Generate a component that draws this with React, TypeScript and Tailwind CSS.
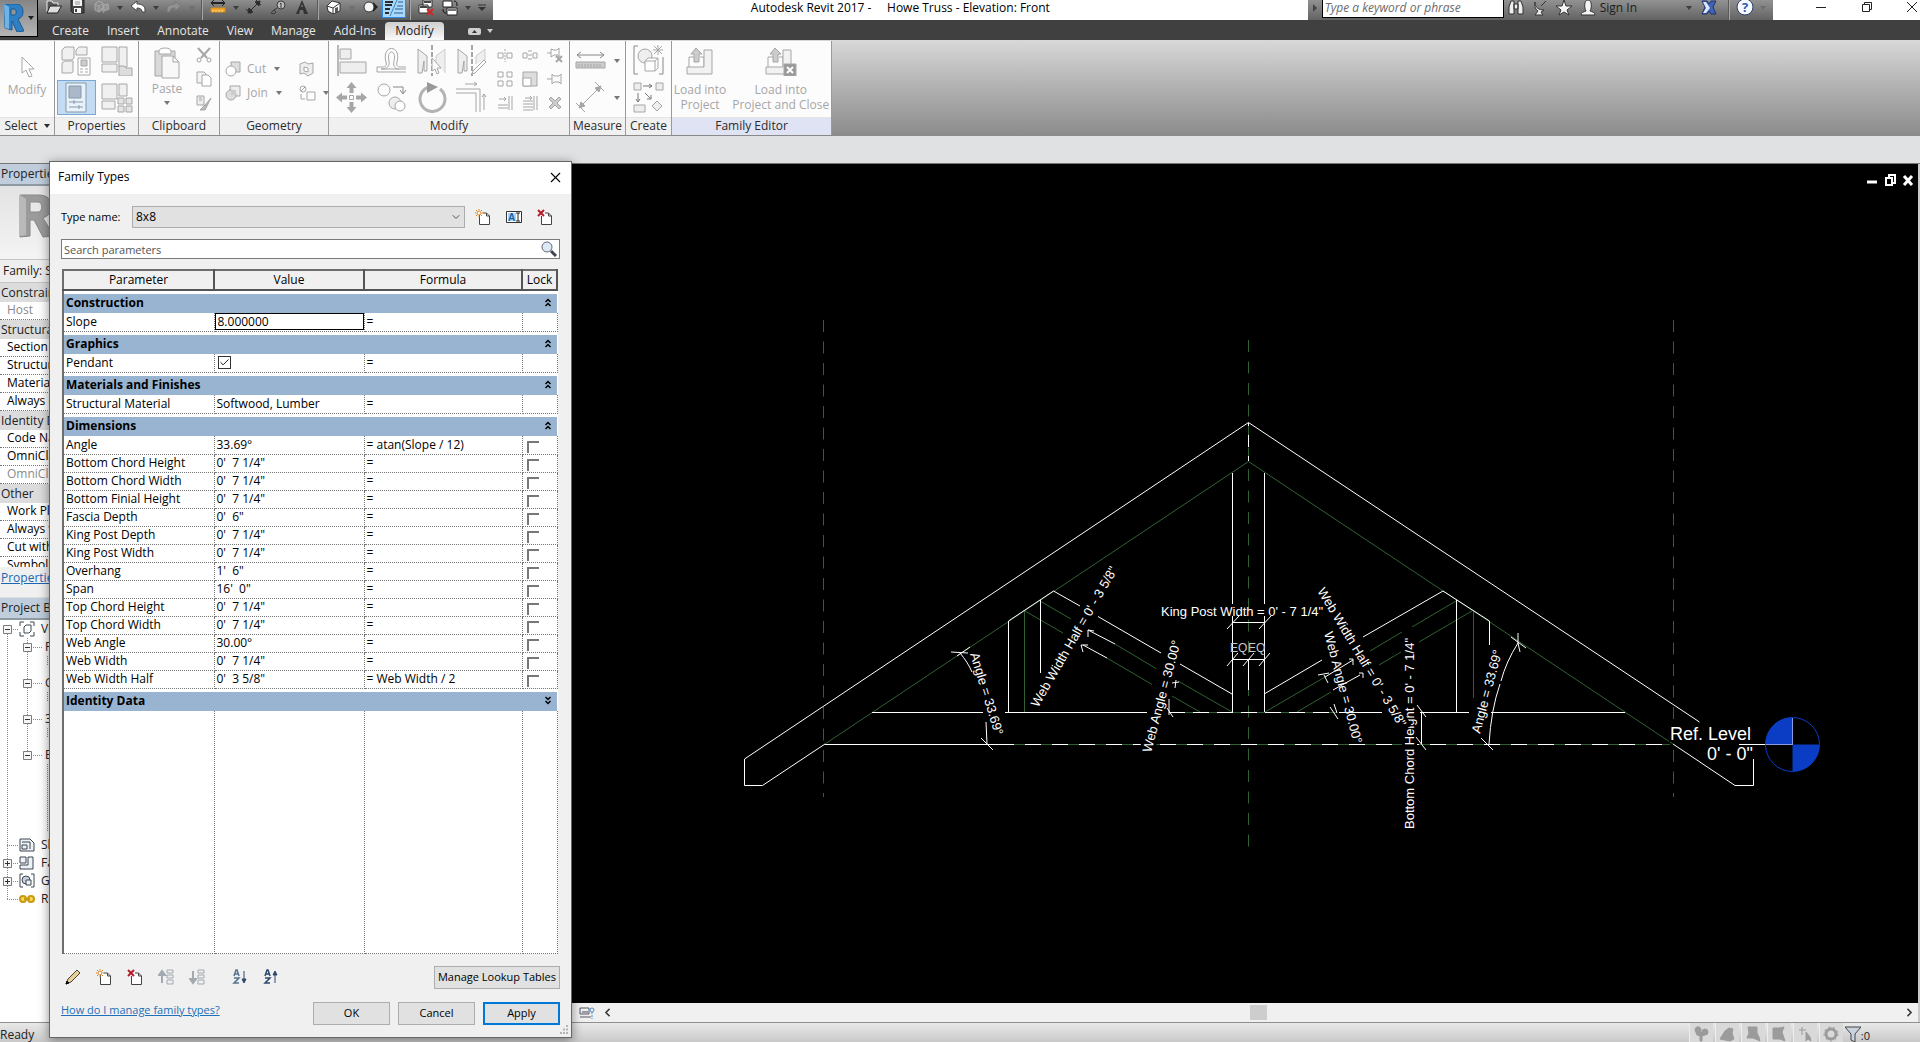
import React from "react";
import { Check, ChevronDown, ChevronLeft, ChevronRight, X } from "lucide-react";

type IconProps = {
  w?: number;
  h?: number;
  className?: string;
  children: React.ReactNode;
};

const Icon = ({ w = 16, h = 16, className, children }: IconProps) => (
  <svg
    width={w}
    height={h}
    viewBox={`0 0 ${w} ${h}`}
    fill="none"
    stroke="currentColor"
    strokeWidth={1}
    className={`shrink-0 ${className ?? ""}`}
    aria-hidden="true"
  >
    {children}
  </svg>
);

const Caret = ({ className }: { className?: string }) => (
  <Icon w={6} h={4} className={className}>
    <path d="M0 0h6L3 4z" fill="currentColor" stroke="none" />
  </Icon>
);

/* ---------- quick access toolbar ---------- */

const QuickButton = (props: { label: string; children: React.ReactNode }) => (
  <button
    aria-label={props.label}
    className="flex h-5 w-6 shrink-0 items-start justify-center"
  >
    {props.children}
  </button>
);

const QuickCaret = ({ dim }: { dim?: boolean }) => (
  <span
    className={`flex h-4 w-3 shrink-0 items-center justify-center ${dim ? "text-[#6c6c6c]" : "text-[#3c3c3c]"}`}
  >
    <Caret />
  </span>
);

const QuickDivider = () => (
  <span className="mx-[3px] h-5 w-0.5 shrink-0 border-l border-[#5a5a5a] bg-[#a5a5a5]" />
);

const QuickAccess = () => (
  <div className="flex h-5 w-[493px] shrink-0 items-start bg-gradient-to-b from-[#8e8e8e] to-[#5b5b5b] pl-[42px]">
    <QuickButton label="Open">
      <Icon h={15}>
        <path d="M1 12V1h5l1 2h5v3" fill="#555" stroke="#eee" />
        <path d="M1 13l3-7h11.500l-4 7z" fill="#ddd" stroke="#222" />
      </Icon>
    </QuickButton>
    <QuickButton label="Save">
      <Icon h={15}>
        <path d="M1 0h13v13H3l-2-2z" fill="#444" stroke="#222" />
        <path d="M3 0h9v6H3zM4 8h7v5H4z" fill="#f2f2f2" stroke="none" />
        <path d="M5 2h5M5 4h5" stroke="#999" />
        <path d="M5 9h2v3H5z" fill="#444" stroke="none" />
      </Icon>
    </QuickButton>
    <QuickButton label="Synchronize">
      <Icon h={15} className="text-[#a9a9a9]">
        <path d="M1 4l4-3 4 2v6l-4 3-4-2zM1 4l4 2 4-3M5 6v6" fill="#8b8b8b" />
        <path d="M9 5l5-1 1 5-5 2zM7 8l3 5" fill="#959595" />
      </Icon>
    </QuickButton>
    <QuickCaret />
    <QuickButton label="Undo">
      <Icon h={15}>
        <path
          d="M1 6l6-5v3c5 0 8 2 8 6v2h-3c0-3-2-4-5-4v3z"
          fill="#fff"
          stroke="#444"
        />
      </Icon>
    </QuickButton>
    <QuickCaret />
    <QuickButton label="Redo">
      <Icon h={15}>
        <path
          d="M15 6L9 1v3C4 4 1 6 1 10v2h3c0-3 2-4 5-4v3z"
          fill="#919191"
          stroke="#777"
        />
      </Icon>
    </QuickButton>
    <QuickCaret dim />
    <QuickDivider />
    <QuickButton label="Measure">
      <Icon h={15}>
        <path d="M1 3h14" stroke="#222" strokeWidth={2} />
        <path d="M4 0L1 3l3 3M12 0l3 3-3 3" stroke="#222" />
        <path d="M1 8h14v4H1z" fill="#f3a62d" stroke="#d98b16" />
        <path d="M3 10v2M6 10v2M9 10v2M12 10v2" stroke="#fbe3a5" />
      </Icon>
    </QuickButton>
    <QuickCaret />
    <QuickButton label="Aligned Dimension">
      <Icon h={15} className="text-[#2d2d2d]">
        <path d="M3 12L13 2" />
        <path d="M2 13l1-5 4 4zM14 1l-1 5-4-4z" fill="currentColor" />
        <path d="M0 9l5 5M10 0l5 5" />
      </Icon>
    </QuickButton>
    <QuickButton label="Tag by Category">
      <Icon h={15} className="text-[#383838]">
        <circle cx="11" cy="5" r="4" fill="#bdbdbd" />
        <path d="M10 4l1-1v5M7 8l-3 2" />
        <path d="M1 13l3-3 2 2-2 2z" />
      </Icon>
    </QuickButton>
    <QuickButton label="Text">
      <Icon h={15}>
        <path
          d="M2 14L8 0l6 14h-4l-1-4H6l-1 4zM7 7h2L8 4z"
          fill="#333"
          stroke="none"
        />
      </Icon>
    </QuickButton>
    <QuickDivider />
    <QuickButton label="Default 3D View">
      <Icon h={15}>
        <path
          d="M1 6l5-5 8 2v8l-7 3-5-3z"
          fill="#fff"
          stroke="#333"
        />
        <path d="M1 6l6 2 7-5M7 8v6" stroke="#333" />
        <path d="M9 8l3-1v5l-3 1z" fill="#555" stroke="none" />
      </Icon>
    </QuickButton>
    <QuickCaret dim />
    <QuickButton label="Section">
      <Icon h={15}>
        <path d="M11 2l5 5-5 5z" fill="#222" stroke="none" />
        <circle cx="7" cy="7" r="5" fill="#f4f4f4" stroke="#333" />
      </Icon>
    </QuickButton>
    <button
      aria-label="Thin Lines"
      aria-pressed="true"
      className="flex h-[18px] w-6 shrink-0 items-start justify-center border border-t-0 border-[#2e8ae6] bg-[#a8d8fa]"
    >
      <Icon w={20} h={16}>
        <path d="M13 0L6 16" stroke="#3b82c4" />
        <path d="M1 2h8M1 5h7M1 9h5M1 13h4" stroke="#2b2b2b" strokeWidth={2} />
        <path d="M14 2h5M13 6h6M11 9h8M10 13h9" stroke="#2b5f8f" />
      </Icon>
    </button>
    <QuickDivider />
    <QuickButton label="Close Hidden Windows">
      <Icon h={16}>
        <path d="M5 0h9v7H5zM1 5h9v8H1z" fill="#fff" stroke="#333" />
        <path d="M2 7h7M6 2h7" stroke="#444" strokeWidth={2} />
        <path d="M9 9l6 6M15 9l-6 6" stroke="#cc2a2a" strokeWidth={2} />
      </Icon>
    </QuickButton>
    <QuickButton label="Switch Windows">
      <Icon h={16}>
        <path d="M1 1h9v6H1zM5 8h10v7H5z" fill="#fff" stroke="#222" />
        <path d="M6 10h8" stroke="#777" strokeWidth={2} />
        <path d="M12 1c3 0 3 2 3 5M1 9c0 3 1 4 3 4" stroke="#111" />
      </Icon>
    </QuickButton>
    <QuickCaret />
    <span className="flex h-4 w-4 items-center justify-center">
      <Icon w={8} h={8}>
        <path d="M0 1h8" stroke="#333" />
        <path d="M0 3h8L4 7z" fill="#333" stroke="none" />
      </Icon>
    </span>
  </div>
);

const InfoCenter = () => (
  <div className="flex h-5 shrink-0 items-start bg-gradient-to-b from-[#929292] to-[#636363]">
    <span className="flex h-4 w-[14px] items-center justify-center">
      <Icon w={4} h={8}>
        <path d="M0 0l4 4-4 4z" fill="#444" stroke="none" />
      </Icon>
    </span>
    <input
      type="text"
      aria-label="Search help"
      placeholder="Type a keyword or phrase"
      className="h-[18px] w-[182px] border border-t-0 border-black bg-white px-0.5 pb-0.5 text-xs italic text-[#555] placeholder:text-[#6b6b6b]"
    />
    <div className="flex items-start">
      <QuickButton label="Search">
        <Icon>
          <path
            d="M1 14V7l2-6h3v13zM10 14V1h3l2 6v7zM6 4h4v5H6z"
            fill="#eee"
            stroke="#333"
          />
        </Icon>
      </QuickButton>
      <QuickButton label="Subscription Center">
        <Icon>
          <path
            d="M3 2c0 6 4 8 9 8L9 12l2 3H3l3-4C3 9 2 5 3 2zM9 6l5-5"
            fill="#eee"
            stroke="#333"
          />
        </Icon>
      </QuickButton>
      <QuickButton label="Favorites">
        <Icon>
          <path
            d="M8 0l2 6h6l-5 4 2 5-5-3-5 3 2-5-5-4h6z"
            fill="#f4f4f4"
            stroke="#333"
          />
        </Icon>
      </QuickButton>
      <button className="flex h-5 items-start gap-1 pl-1 text-xs text-[#1c1c1c]">
        <Icon>
          <path
            d="M1 15c0-3 3-3 5-4-2-3-2-11 2-11s4 8 2 11c2 1 5 1 5 4z"
            fill="#f4f4f4"
            stroke="#333"
          />
        </Icon>
        Sign In
      </button>
    </div>
    <span className="w-[46px]" />
    <QuickCaret />
    <QuickButton label="Exchange Apps">
      <Icon className="ml-1">
        <path
          d="M1 1h5l2 3 2-3h5l-3 6 3 7h-5l-2-3-2 3H1l3-7z"
          fill="#3f63b5"
          stroke="#20356d"
        />
        <path d="M2 2h3l4 6-4 5H2l3-5z" fill="#dfe7fa" stroke="none" />
      </Icon>
    </QuickButton>
    <span className="ml-1.5 flex">
      <QuickDivider />
    </span>
    <QuickButton label="Help">
      <svg width="18" height="16" viewBox="0 0 18 16" aria-hidden="true">
        <circle cx="9" cy="7" r="8" fill="#f6f9ff" stroke="#2d3f66" />
        <text
          x="9"
          y="12"
          textAnchor="middle"
          fontFamily="Open Sans, sans-serif"
          fontSize="13"
          fontWeight="700"
          fill="#2f5cae"
        >
          ?
        </text>
      </svg>
    </QuickButton>
    <QuickCaret dim />
    <span className="w-1" />
  </div>
);

const WindowButtons = () => (
  <div className="flex h-5 w-[147px] shrink-0 items-start justify-between bg-white pl-10 text-[#222]">
    <button aria-label="Minimize">
      <Icon h={14}>
        <path d="M3 7.500h10" />
      </Icon>
    </button>
    <button aria-label="Restore">
      <Icon h={14}>
        <path d="M3.500 4.500h7v7h-7zM5.500 4.500v-2h7v7h-2" />
      </Icon>
    </button>
    <button aria-label="Close">
      <Icon h={14}>
        <path d="M3 2l10 10M13 2L3 12" />
      </Icon>
    </button>
  </div>
);

const TitleBar = () => (
  <header className="flex h-5 shrink-0 bg-white">
    <QuickAccess />
    <h1 className="flex-1 whitespace-pre text-center text-xs leading-[15px] text-black">
      {"Autodesk Revit 2017 -     Howe Truss - Elevation: Front"}
    </h1>
    <InfoCenter />
    <WindowButtons />
  </header>
);

const tabs = ["Create", "Insert", "Annotate", "View", "Manage", "Add-Ins"];

const TabBar = () => (
  <nav className="flex h-5 shrink-0 items-end bg-[#404040] pl-[43px] text-xs text-[#e6e6e6]">
    {tabs.map((tab) => (
      <button key={tab} className="h-[18px] px-[9px] leading-4">
        {tab}
      </button>
    ))}
    <button className="h-[18px] rounded-t-sm bg-gradient-to-b from-[#cfcfcf] to-[#fafafa] px-2.5 leading-4 text-[#222]">
      Modify
    </button>
    <button
      aria-label="Minimize ribbon"
      className="ml-6 flex h-[18px] items-center gap-1.5 text-[#d0d0d0]"
    >
      <Icon w={13} h={7}>
        <rect width="13" height="7" rx="2" fill="#cfcfcf" stroke="none" />
        <path d="M4 5h5L6.500 2z" fill="#333" stroke="none" />
      </Icon>
      <Caret />
    </button>
  </nav>
);

const AppButton = () => (
  <button
    aria-label="Application menu"
    className="absolute left-0 top-0 z-10 flex h-[37px] w-[38px] items-center border-b border-r border-black bg-gradient-to-b from-[#858585] to-[#b5b5b5] pl-1"
  >
    <Icon w={20} h={28}>
      <path
        d="M0 0h11c6 0 8 3 8 8 0 4-2 6-5 7l6 12-7 1-5-11v9l-7-2zM7 5v6h3c3 0 3-6 0-6z"
        fill="#2f7fc4"
        stroke="#1b5b96"
      />
      <path d="M0 0l5 3v22l-4-1z" fill="#6fb4e8" stroke="none" />
    </Icon>
    <Caret className="ml-1 text-[#222]" />
  </button>
);

/* ---------- ribbon ---------- */

type PanelProps = {
  title: React.ReactNode;
  width: string;
  accent?: boolean;
  children: React.ReactNode;
};

const Panel = ({ title, width, accent, children }: PanelProps) => (
  <section
    className={`flex shrink-0 flex-col border-r border-[#9a9a9a] bg-[#fcfcfc] ${width}`}
  >
    <div className="flex h-[76px] items-center justify-center text-[#a6a6a6]">
      {children}
    </div>
    <h2
      className={`flex h-[18px] items-center justify-center border-t border-[#e4e4e4] pb-0.5 text-xs text-[#2c2c2c] ${accent ? "bg-[#dfe3f3]" : "bg-[#f0f0f1]"}`}
    >
      {title}
    </h2>
  </section>
);

const Tool = (props: {
  label: string;
  className?: string;
  children: React.ReactNode;
}) => (
  <button
    aria-label={props.label}
    className={`flex items-center justify-center ${props.className ?? ""}`}
  >
    {props.children}
  </button>
);

const Ribbon = () => (
  <div className="flex h-24 shrink-0 border-b border-[#8a8a8a] bg-gradient-to-b from-[#d8d8d8] to-[#8c8c8c] pt-px">
    <Panel
      title={
        <>
          Select <Caret className="ml-1.5" />
        </>
      }
      width="w-[55px]"
    >
      <button className="flex flex-col items-center gap-1 pb-1 text-xs">
        <Icon w={14} h={22}>
          <path d="M2 1v16l4-3 3 7 3-1-3-7h5z" fill="#fff" />
        </Icon>
        Modify
      </button>
    </Panel>

    <Panel title="Properties" width="w-[84px]">
      <div className="grid grid-cols-2 gap-0.5">
        <Tool label="Family Category" className="h-[35px] w-[39px]">
          <Icon w={30} h={30}>
            <path
              d="M1 4l3-3h9v11l-2 2H1zM15 4l3-3h8v8h-11zM1 17l3-2h8v11l-2 1H1z"
              fill="#f0f0f0"
            />
            <path d="M17 12h12v17H17z" fill="#fff" />
            <path d="M20 14h6v6h-6z" fill="#ccc" />
            <path d="M19 23h3M24 23h3M19 26h3M24 26h3" />
          </Icon>
        </Tool>
        <Tool label="Family Types" className="h-[35px] w-[39px]">
          <Icon w={32} h={30}>
            <path d="M1 1h15v15H1zM18 1h8v20h-8zM1 18h15v8H1z" fill="#f0f0f0" />
            <path d="M18 20h5l2 2h6v8H18z" fill="#ddd" />
          </Icon>
        </Tool>
        <button
          aria-label="Properties"
          aria-pressed="true"
          className="flex h-[35px] w-[39px] items-center justify-center border border-[#7da7d3] bg-[#c3dcf4] text-[#8799aa]"
        >
          <Icon w={22} h={31}>
            <path d="M1 1h20v29H1z" fill="#e8f2fb" />
            <path d="M4 4h12v12H4z" fill="#a9b9c9" />
            <path d="M4 20h14M4 25h14M9 18v4M14 23v4" />
          </Icon>
        </button>
        <Tool label="Type Properties" className="h-[35px] w-[39px]">
          <Icon w={32} h={30}>
            <path d="M1 1h15v15H1zM18 1h8v12h-8zM1 18h13v8H1z" fill="#f0f0f0" />
            <path
              d="M17 15h6v6h-6zM25 15h6v6h-6zM17 23h6v6h-6zM25 23h6v6h-6z"
              fill="#e4e4e4"
            />
          </Icon>
        </Tool>
      </div>
    </Panel>

    <Panel title="Clipboard" width="w-[81px]">
      <div className="flex gap-3.5 pl-1.5">
        <button className="flex flex-col items-center text-xs">
          <Icon w={28} h={32}>
            <path d="M2 4h20v25H2z" fill="#d9d9d9" />
            <path d="M6 4c0-4 12-4 12 0v3H6z" fill="#fff" />
            <path d="M9 9h11l6 6v16H9z" fill="#f8f8f8" />
            <path d="M20 9v6h6" />
          </Icon>
          <span className="mt-0.5 leading-4">Paste</span>
          <Caret className="mt-1 text-[#777]" />
        </button>
        <div className="flex flex-col gap-2">
          <Tool label="Cut to Clipboard">
            <Icon>
              <path d="M2 1l9 10M14 1L5 11" strokeWidth={2} />
              <circle cx="3" cy="13" r="2" />
              <circle cx="13" cy="13" r="2" />
            </Icon>
          </Tool>
          <Tool label="Copy to Clipboard">
            <Icon>
              <path d="M1 1h7l2 2v9H1z" fill="#f4f4f4" />
              <path d="M6 4h6l3 3v8H6z" fill="#fff" />
            </Icon>
          </Tool>
          <Tool label="Match Type Properties">
            <Icon>
              <path d="M1 1h7v9H1zM3 3h3M3 5h3" fill="#eee" />
              <path d="M15 3l-6 7 2 1zM9 10l-5 5h5l2-4" fill="#bbb" />
            </Icon>
          </Tool>
        </div>
      </div>
    </Panel>

    <Panel title="Geometry" width="w-[109px]">
      <div className="grid grid-cols-[74px_28px] gap-y-2 pl-1 pt-1 text-xs leading-4">
        <button className="flex items-center">
          <Icon>
            <path d="M6 1h9v10H6z" fill="#ddd" />
            <circle cx="6" cy="10" r="5" fill="#fff" />
          </Icon>
          <span className="ml-1.5">Cut</span>
          <Caret className="ml-2 text-[#777]" />
        </button>
        <Tool label="Cope" className="justify-start">
          <Icon>
            <path d="M1 3l5-2 3 2 5-1v10l-5 3-4-3-4 1z" fill="#eee" />
            <path d="M5 6l4 1v4l-4-1z" fill="#fff" />
          </Icon>
        </Tool>
        <button className="flex items-center">
          <Icon>
            <path d="M5 1h10v10H5z" fill="#eee" />
            <circle cx="6" cy="10" r="5" fill="#ddd" />
            <path d="M6 5h5v5H6z" fill="#ccc" stroke="none" />
          </Icon>
          <span className="ml-1.5">Join</span>
          <Caret className="ml-2 text-[#777]" />
        </button>
        <Tool label="Split Face" className="justify-start gap-1.5">
          <Icon w={18}>
            <circle cx="4" cy="4" r="3" />
            <path d="M2 6l4-4M2 9v5h4M8 7h8v8H8z" />
          </Icon>
          <Caret className="text-[#777]" />
        </Tool>
      </div>
    </Panel>

    <Panel title="Modify" width="w-[241px]">
      <div className="flex items-center gap-2.5">
        <div className="grid grid-cols-4 gap-x-[9px] gap-y-1.5">
          <Tool label="Align">
            <Icon w={31} h={31}>
              <path d="M2 0v31" stroke="#777" />
              <path d="M4 4h11v10H4zM4 17h26v11H4z" fill="#eee" />
            </Icon>
          </Tool>
          <Tool label="Offset">
            <Icon w={31} h={31}>
              <path d="M30 27H1v-5h5c4 0 5-2 4-5C5-1 26-1 21 17c-1 3 0 5 4 5h5" />
              <path d="M30 24H5c6 0 9-3 8-8-3-12 8-12 5 0-1 4 0 8 5 8" />
            </Icon>
          </Tool>
          <Tool label="Mirror - Pick Axis">
            <Icon w={31} h={31}>
              <path d="M16 0v31" strokeDasharray="5 2" strokeWidth={2} />
              <path d="M2 28V4l9 7v15H8V16L6 28z" fill="#eee" />
              <path d="M29 28V4l-9 7v8" fill="#eee" stroke="#ccc" />
              <path d="M16 13v13l3-2 2 5 2-1-2-5h4z" fill="#fff" />
            </Icon>
          </Tool>
          <Tool label="Mirror - Draw Axis">
            <Icon w={31} h={31}>
              <path d="M16 0v31" strokeDasharray="5 2" strokeWidth={2} />
              <path d="M2 28V4l9 7v15H8V16L6 28z" fill="#eee" />
              <path d="M29 15V4l-9 7v8" fill="#eee" stroke="#ccc" />
              <path d="M17 26l11-11 2 2-11 11-3 1z" fill="#fff" />
            </Icon>
          </Tool>
          <Tool label="Move">
            <Icon w={31} h={31}>
              <path
                d="M15.500 0l5 6h-3v5h-4V6h-3zM15.500 31l5-6h-3v-5h-4v5h-3zM0 15.500l6-5v3h5v4H6v3zM31 15.500l-6-5v3h-5v4h5v3z"
                fill="currentColor"
                stroke="none"
              />
              <path d="M13.500 13.500h4v4h-4z" fill="#fff" />
            </Icon>
          </Tool>
          <Tool label="Copy">
            <Icon w={31} h={31}>
              <circle cx="8" cy="8" r="6" />
              <circle cx="19" cy="21" r="6" fill="#eee" />
              <circle cx="24" cy="24" r="5" fill="#fff" />
              <path d="M17 5h10v6M24 8l3 4 3-4" stroke="#888" />
            </Icon>
          </Tool>
          <Tool label="Rotate">
            <Icon w={31} h={31}>
              <path
                d="M13 5a12.500 12.500 0 1 0 11 2"
                strokeWidth={3}
                stroke="#b3b3b3"
              />
              <path d="M11 0l11 5-11 6z" fill="#999" stroke="none" />
            </Icon>
          </Tool>
          <Tool label="Trim/Extend to Corner">
            <Icon w={31} h={31}>
              <path d="M0 7h24v23M0 11h20v19M9 2h12M18 0l3 2-3 2" />
              <path d="M28 28V12M26 15l2-3 2 3" />
            </Icon>
          </Tool>
        </div>
        <div className="grid grid-cols-3 gap-x-[9px] gap-y-2">
          <Tool label="Split Element">
            <Icon>
              <path d="M1 6h5v5H1zM10 6h5v5h-5z" />
              <path d="M8 2v13" strokeDasharray="2 1" />
            </Icon>
          </Tool>
          <Tool label="Split with Gap">
            <Icon>
              <path d="M1 6h4v5H1zM11 6h4v5h-4z" />
              <path d="M7 3v11M9 3v11" strokeDasharray="2 2" />
            </Icon>
          </Tool>
          <Tool label="Unpin">
            <Icon>
              <path d="M0 6h4M4 2v8l3-2h4l1 2V1l-2 2H7z" />
              <path d="M9 9l6 6M15 9l-6 6" strokeWidth={2} />
            </Icon>
          </Tool>
          <Tool label="Array">
            <Icon>
              <path d="M1 1h5v5H1zM10 1h5v5h-5zM1 10h5v5H1zM10 10h5v5h-5z" />
            </Icon>
          </Tool>
          <Tool label="Scale">
            <Icon>
              <path d="M1 1h14v14H1z" fill="#ddd" />
              <path d="M1 7h8v8H1z" fill="#fff" />
            </Icon>
          </Tool>
          <Tool label="Pin">
            <Icon>
              <path d="M0 8h5M5 3v10l2-2h5l2 2V3l-2 2H7z" />
            </Icon>
          </Tool>
          <Tool label="Trim/Extend Single">
            <Icon>
              <path d="M12 1v14M15 1v14M1 10h10M1 13h10M2 4h7M7 2l2 2-2 2" />
            </Icon>
          </Tool>
          <Tool label="Trim/Extend Multiple">
            <Icon>
              <path d="M12 1v14M15 1v14M1 6h10M1 9h10M1 12h10M1 15h10M3 3h7M8 1l2 2-2 2" />
            </Icon>
          </Tool>
          <Tool label="Delete">
            <Icon>
              <path
                d="M2 4l2-2 4 4 4-4 2 2-4 4 4 4-2 2-4-4-4 4-2-2 4-4z"
                fill="#ccc"
              />
            </Icon>
          </Tool>
        </div>
      </div>
    </Panel>

    <Panel title="Measure" width="w-14">
      <div className="flex flex-col gap-1.5">
        <Tool label="Measure Between" className="gap-2">
          <Icon w={31} h={31}>
            <path d="M2 10h27M6 7l-4 3 4 3M25 7l4 3-4 3" stroke="#888" />
            <path d="M1 17h29v6H1z" fill="#ccc" />
            <path d="M4 19v3M7 19v3M10 19v3M13 19v3M16 19v3M19 19v3M22 19v3M25 19v3" />
          </Icon>
          <Caret className="text-[#777]" />
        </Tool>
        <Tool label="Dimension" className="gap-2">
          <Icon w={31} h={31}>
            <path d="M5 25L25 5M1 21l9 9M20 0l9 9" />
            <path d="M4 26l2-6 4 4zM26 4l-6 2 4 4z" fill="currentColor" />
          </Icon>
          <Caret className="text-[#777]" />
        </Tool>
      </div>
    </Panel>

    <Panel title="Create" width="w-[46px]">
      <div className="flex flex-col gap-1.5">
        <Tool label="Create Group">
          <Icon w={31} h={31}>
            <path d="M5 1H1v28h4M26 29h4V12" stroke="#888" />
            <circle cx="12" cy="11" r="7" fill="#eee" />
            <path d="M12 16l3-3h10v10l-3 3H12zM12 16h10v10M22 16l3-3" fill="#fff" />
            <path d="M25 0v10M20 5h10M21 1l8 8M29 1l-8 8" />
          </Icon>
        </Tool>
        <Tool label="Create Similar">
          <Icon w={31} h={31}>
            <path d="M1 1h7v7H1zM23 1h7v7h-7zM1 23h11v7H1zM24 19l5 5-5 5-5-5z" fill="#eee" />
            <path d="M10 4h9M16 2l3 2-3 2M5 11v9M3 17l2 3 2-3M12 11l6 6M18 13v4h-4" stroke="#777" />
          </Icon>
        </Tool>
      </div>
    </Panel>

    <Panel title="Family Editor" width="w-40" accent>
      <div className="flex gap-1.5 text-xs leading-[15px]">
        <button className="flex flex-col items-center gap-1.5">
          <Icon w={28} h={29}>
            <path d="M8 10H3v11h15V10h-4" />
            <path d="M10 1l6 6h-3v8H8V7H5z" fill="#ccc" />
            <path d="M18 3h8v24H1v-7h17z" fill="#f2f2f2" />
          </Icon>
          <span>
            Load into
            <br />
            Project
          </span>
        </button>
        <button className="flex flex-col items-center gap-1.5">
          <Icon w={32} h={29}>
            <path d="M8 10H3v11h15V10h-4" />
            <path d="M10 1l6 6h-3v8H8V7H5z" fill="#ccc" />
            <path d="M18 3h8v24H1v-7h17z" fill="#f2f2f2" />
            <path d="M19 17h12v12H19z" fill="#999" />
            <path d="M22 20l6 6M28 20l-6 6" stroke="#fff" strokeWidth={2} />
          </Icon>
          <span>
            Load into
            <br />
            Project and Close
          </span>
        </button>
      </div>
    </Panel>
  </div>
);

/* ---------- left palettes ---------- */

interface PropertyGroup {
  name: string;
  items: { name: string; disabled?: boolean }[];
}

const propertyGroups: PropertyGroup[] = [
  { name: "Constraints", items: [{ name: "Host", disabled: true }] },
  {
    name: "Structural",
    items: [
      { name: "Section" },
      { name: "Structural" },
      { name: "Material" },
      { name: "Always export" },
    ],
  },
  {
    name: "Identity Data",
    items: [
      { name: "Code Name" },
      { name: "OmniClass" },
      { name: "OmniClass", disabled: true },
    ],
  },
  {
    name: "Other",
    items: [
      { name: "Work Plane" },
      { name: "Always vertical" },
      { name: "Cut with" },
      { name: "Symbolic" },
    ],
  },
];

const PropertiesPalette = () => (
  <section className="flex h-[434px] shrink-0 flex-col">
    <h2 className="flex h-[22px] shrink-0 items-center border-b-2 border-[#8f9aa5] bg-[#bfcddc] px-px text-xs text-[#222]">
      Properties
    </h2>
    <div className="flex h-[73px] shrink-0 items-start bg-gradient-to-b from-[#e3e3e3] to-[#f4f4f4] pl-[19px] pt-2">
      <Icon w={36} h={44}>
        <path
          d="M1 1h18c10 0 13 4 13 12 0 6-3 9-8 11l11 18-11 1-9-17h-4v16l-10 1zM11 8v10h8c5 0 5-10 0-10z"
          fill="#9b9b9b"
          stroke="#888"
        />
        <path d="M1 1l6 4v36l-6 1z" fill="#b9b9b9" stroke="none" />
      </Icon>
    </div>
    <div className="flex h-6 shrink-0 items-center border-y border-[#c4c4c4] bg-[#eeeeee] pl-[3px] text-xs text-[#222]">
      Family: Structural
    </div>
    <div className="flex-1 overflow-hidden text-xs">
      {propertyGroups.map((group) => (
        <div key={group.name}>
          <h3 className="h-[19px] bg-[#dcdcdc] pl-px leading-[19px] text-[#222]">
            {group.name}
          </h3>
          {group.items.map((item, index) => (
            <div
              key={index}
              className={`h-[18px] border-b border-dotted border-[#777] bg-white pl-[7px] leading-4 ${item.disabled ? "text-[#8a8a8a]" : "text-black"}`}
            >
              {item.name}
            </div>
          ))}
        </div>
      ))}
    </div>
    <div className="h-[31px] shrink-0 border-b border-[#ddd] bg-[#f0f0f0] pl-px text-xs leading-[22px]">
      <a href="#properties-help" className="text-[#1d66b3] underline">
        Properties help
      </a>
    </div>
  </section>
);

interface TreeRow {
  label?: string;
  level: number;
  toggle?: "plus" | "minus";
  icon?: "views" | "sheets" | "families" | "groups" | "links";
}

const treeRows: TreeRow[] = [
  { label: "Views", level: 0, toggle: "minus", icon: "views" },
  { label: "Floor Plans", level: 1, toggle: "minus" },
  { level: 2 },
  { label: "Ceiling Plans", level: 1, toggle: "minus" },
  { level: 2 },
  { label: "3D Views", level: 1, toggle: "minus" },
  { level: 2 },
  { label: "Elevations", level: 1, toggle: "minus" },
  { level: 2 },
  { level: 2 },
  { level: 2 },
  { level: 2 },
  { label: "Sheets", level: 0, icon: "sheets" },
  { label: "Families", level: 0, toggle: "plus", icon: "families" },
  { label: "Groups", level: 0, toggle: "plus", icon: "groups" },
  { label: "Revit Links", level: 0, icon: "links" },
];

const treeIcons = {
  views: (
    <>
      <path d="M1 5V1h4M11 1h4v4M15 11v4h-4M5 15H1v-4" />
      <path d="M5 6l2-2h5v6l-2 2H5z" />
    </>
  ),
  sheets: (
    <>
      <path d="M1 2h10l4 4v8H1z" fill="#eef1f5" />
      <path d="M3 5h8v7M3 8h5v4H3z" />
    </>
  ),
  families: <path d="M1 2h6v6H1zM9 2h5v12H1v-4h8z" fill="#eef1f5" />,
  groups: (
    <>
      <path d="M4 1H1v13h3M12 1h3v13h-3" />
      <circle cx="7" cy="7" r="4" fill="#c9d3de" />
      <path d="M7 7h5v5H7z" fill="#eef1f5" />
    </>
  ),
  links: (
    <g stroke="#c79a12" strokeWidth={2}>
      <rect x="1" y="5" width="6" height="6" rx="3" fill="#f8dc52" />
      <rect x="9" y="5" width="6" height="6" rx="3" fill="#f8dc52" />
      <path d="M5 8h6" />
    </g>
  ),
};

const Toggle = ({ kind }: { kind: "plus" | "minus" }) => (
  <button aria-label={kind === "plus" ? "Expand" : "Collapse"}>
    <Icon w={9} h={9} className="text-[#7c7c7c]">
      <path d="M.5.5h8v8h-8z" fill="#f6f6f6" />
      <path d={kind === "plus" ? "M2 4.500h5M4.500 2v5" : "M2 4.500h5"} stroke="#333" />
    </Icon>
  </button>
);

const ProjectBrowser = () => (
  <section className="flex flex-1 flex-col overflow-hidden">
    <h2 className="flex h-[22px] shrink-0 items-center border-b-2 border-[#8f9aa5] bg-[#bfcddc] px-px text-xs text-[#222]">
      Project Browser
    </h2>
    <div className="relative flex-1 bg-white">
      <svg
        width="60"
        height="400"
        viewBox="0 0 60 400"
        className="absolute left-0 top-0"
        aria-hidden="true"
      >
        <path
          d="M7.500 10v269M27.500 18v118M47.500 36v10M47.500 72v10M47.500 108v10M47.500 144v68M7 9.500h12M7 225.500h12M7 243.500h12M7 261.500h12M7 279.500h12M27 27.500h15M27 63.500h15M27 99.500h15M27 135.500h15"
          stroke="#8a8a8a"
          strokeDasharray="1 1"
        />
      </svg>
      <ul className="relative text-xs leading-[18px] text-[#222]">
        {treeRows.map((row, index) => (
          <li key={index} className="flex h-[18px] items-center">
            {row.level === 0 && (
              <>
                <span className="flex w-[19px] shrink-0 pl-[3px]">
                  {row.toggle && <Toggle kind={row.toggle} />}
                </span>
                {row.icon && (
                  <Icon className="mr-1.5 text-[#3d4650]">
                    {treeIcons[row.icon]}
                  </Icon>
                )}
              </>
            )}
            {row.level === 1 && (
              <span className="flex w-[45px] shrink-0 pl-[23px]">
                {row.toggle && <Toggle kind={row.toggle} />}
              </span>
            )}
            {row.label}
          </li>
        ))}
      </ul>
    </div>
  </section>
);

/* ---------- drawing area ---------- */

type NoteProps = {
  x: number;
  y: number;
  angle?: number;
  length: number;
  mask?: boolean;
  size?: number;
  children: React.ReactNode;
};

// dimension text with the blank box that hides the linework under it
const Note = ({ x, y, angle = 0, length, mask = true, size = 13, children }: NoteProps) => (
  <g transform={`translate(${x} ${y}) rotate(${angle})`} stroke="none">
    {mask && (
      <rect x={-2} y={-size + 1} width={length} height={size + 2} fill="#000" />
    )}
    <text fontSize={size} fill="#fff">
      {children}
    </text>
  </g>
);

const TrussDrawing = () => (
  <svg
    viewBox="571 164 1347 839"
    className="block h-full w-full"
    fontFamily="Liberation Sans, Arial, sans-serif"
    fill="none"
    stroke="#fff"
    role="img"
    aria-label="Howe truss front elevation"
  >
    {/* reference planes */}
    <g stroke="#2f6132">
      <path d="M823.500 320v477M1673.500 320v477M1248.500 340v510" strokeDasharray="12 9.500" />
      <path d="M825 744L1248.500 461.500L1673 744" />
      <path d="M1024.500 611v101M1473.500 611v87" />
      <path d="M1040 601l31 18M1115 644l41 24.500M1178 681l54 31" />
      <path d="M1025 611l38 22M1107 658l45 26.500M1172 696l28 16" />
      <path d="M1456 601l-44 26M1402 632l-32 19M1325 677l-60 35" />
      <path d="M1472 611l-53 31M1401 652l-22 13M1331 692l-34 20" />
      <path d="M998 744.500h672M1169 712.500h168" />
    </g>

    {/* chords */}
    <path d="M825 744l-62.500 41.500H744.500V759L1248.500 422.500L1699.500 722" />
    <path d="M1673 744l62 41.500h18.500V759" />
    <path d="M825 744.500h173" />
    <path d="M998 744.500h672" strokeDasharray="16 11" />
    <path d="M872 712.500h111M1005 712.500h142M1339 712.500h43M1420 712.500h49M1491 712.500h134" />
    <path d="M1169 712.500h168" strokeDasharray="16 8" />
    <path d="M1248.500 423v38" strokeDasharray="12 9" strokeDashoffset={9} />

    {/* webs and posts */}
    <path d="M1008.500 712V621L1053.500 591L1080 606M1098 616.500L1161 653M1180 664l52 30" />
    <path d="M1040.500 600v73" />
    <path d="M1489.500 645V621L1443 591L1363 637M1322 660l-57 33.500" />
    <path d="M1456.500 600v112" />
    <path d="M1232.500 473v131M1232.500 616v96M1264.500 473v131M1264.500 616v96" />

    {/* dimension strings under the notes */}
    <path d="M1232 622.500h33M1227 629l12-13M1259 629l12-13" />
    <path d="M1232 659.500h33M1227 666l11-13M1243 666l11-13M1259 666l11-13M1248.500 659v31" />

    <Note x={1414} y={829} angle={-90} length={204}>
      {"Bottom Chord Height = 0' - 7 1/4\""}
    </Note>
    <Note x={1161} y={616} length={174} mask={false}>
      {"King Post Width = 0' - 7 1/4\""}
    </Note>
    <Note x={1038} y={708} angle={-60} length={166}>
      {"Web Width Half = 0' - 3 5/8\""}
    </Note>
    <Note x={1151} y={753} angle={-75} length={118}>
      {"Web Angle = 30.00°"}
    </Note>
    <Note x={1317} y={591} angle={59} length={166}>
      {"Web Width Half = 0' - 3 5/8\""}
    </Note>
    <Note x={1324} y={633} angle={75} length={118} mask={false}>
      {"Web Angle = 30.00°"}
    </Note>
    <Note x={970} y={654} angle={73} length={90}>
      {"Angle = 33.69°"}
    </Note>
    <Note x={1480} y={734} angle={-75} length={90} mask={false}>
      {"Angle = 33.69°"}
    </Note>

    {/* witness lines and ticks that stay above the blank boxes */}
    <path d="M1088 630l27 14M1083 645l24 13" />
    <path d="M1088 637v-7l6 1M1083 652l-2-7h7" />
    <path d="M1349 659h4v6M1359 673h4v5M1353 660l-28 17M1360 675l-27 15" />
    <path d="M960 653c5 6 9 12 12 19M986 722l1 22M981 738l12 12M951 652l17 1M957 656l13-9" />
    <path d="M1172 683l7-1M1176 680l-1 8M1169 699v16M1167 708l6 9" />
    <path d="M1318 675l11-2M1324 675l4 8M1334 704l3 9M1330 707l8 12" />
    <path d="M1421.500 712v32M1417 705l9 12M1416 737l10 13" />
    <path d="M1518 643q-12 19-17 38M1500 684q-9 26-11 60M1518 633v10l2 9M1511 637l15 11M1481 738l12 12" />

    <g fill="#c8c8c8" stroke="none" fontSize={12}>
      <text x="1230" y="652">
        EQ
      </text>
      <text x="1248" y="652">
        EQ
      </text>
    </g>

    {/* level head */}
    <rect x="1669" y="725" width="85" height="17" fill="#000" stroke="none" />
    <g fill="#fff" stroke="none" fontSize={18}>
      <text x="1670" y="740">
        Ref. Level
      </text>
      <text x="1707" y="760">
        {"0' - 0\""}
      </text>
    </g>
    <path d="M1739 744.500h53M1792.500 718v27" />
    <circle cx="1792.500" cy="744.500" r="27" stroke="#0b3dc4" />
    <path
      d="M1792.500 744.500v-27a27 27 0 0 0-27 27zM1792.500 744.500v27a27 27 0 0 0 27-27z"
      fill="#0b3dc4"
      stroke="none"
    />
  </svg>
);

const DrawingView = () => (
  <main className="relative flex min-w-0 flex-1 flex-col border-r-2 border-[#c9c9c9] bg-black">
    <div className="min-h-0 flex-1">
      <TrussDrawing />
    </div>
    <div className="absolute right-0.5 top-2 flex gap-0.5 text-white">
      <button aria-label="Minimize view">
        <Icon>
          <path d="M3 10h10" strokeWidth={3} />
        </Icon>
      </button>
      <button aria-label="Restore view">
        <Icon>
          <path d="M4 6h6v7H4zM7 6V3h6v8h-3" strokeWidth={2} />
        </Icon>
      </button>
      <button aria-label="Close view">
        <Icon>
          <path d="M4 4l8 9M12 4l-8 9" strokeWidth={3} />
        </Icon>
      </button>
    </div>
    <div className="flex h-[19px] shrink-0 items-center bg-[#f0f0f0] text-[#333]">
      <button aria-label="Reveal constraints" className="ml-2">
        <Icon>
          <path d="M1 3h9v6H1zM1 12h11" stroke="#556" />
          <path d="M3 7h6" strokeWidth={2} stroke="#99a" />
          <circle cx="13" cy="5" r="2" stroke="#4b8ccc" />
          <path d="M13 7v7" stroke="#4b8ccc" strokeDasharray="2 1" />
        </Icon>
      </button>
      <button aria-label="Scroll left" className="ml-1.5">
        <ChevronLeft size={13} strokeWidth={3} />
      </button>
      <div className="flex h-full flex-1 items-center justify-center">
        <span className="h-[15px] w-[17px] bg-[#cdcdcd]" />
      </div>
      <button aria-label="Scroll right" className="mr-0.5">
        <ChevronRight size={13} strokeWidth={3} />
      </button>
    </div>
  </main>
);

/* ---------- family types dialog ---------- */

interface Parameter {
  name: string;
  value: string;
  formula?: string;
}

const dimensions: Parameter[] = [
  { name: "Angle", value: "33.69°", formula: "atan(Slope / 12)" },
  { name: "Bottom Chord Height", value: "0'  7 1/4\"" },
  { name: "Bottom Chord Width", value: "0'  7 1/4\"" },
  { name: "Bottom Finial Height", value: "0'  7 1/4\"" },
  { name: "Fascia Depth", value: "0'  6\"" },
  { name: "King Post Depth", value: "0'  7 1/4\"" },
  { name: "King Post Width", value: "0'  7 1/4\"" },
  { name: "Overhang", value: "1'  6\"" },
  { name: "Span", value: "16'  0\"" },
  { name: "Top Chord Height", value: "0'  7 1/4\"" },
  { name: "Top Chord Width", value: "0'  7 1/4\"" },
  { name: "Web Angle", value: "30.00°" },
  { name: "Web Width", value: "0'  7 1/4\"" },
  { name: "Web Width Half", value: "0'  3 5/8\"", formula: "Web Width / 2" },
];

const GroupRow = ({ name, collapsed }: { name: string; collapsed?: boolean }) => (
  <>
    <tr className="h-1">
      <td colSpan={4} />
    </tr>
    <tr className="h-[19px] bg-[#99b4d1]">
      <th colSpan={4} scope="rowgroup" className="p-0 text-left font-bold">
        <div className="flex h-[19px] items-center justify-between pb-0.5 pl-0.5 pr-[5px]">
          {name}
          <button aria-label={collapsed ? "Expand" : "Collapse"}>
            <Icon w={8} h={9} className="text-black">
              <path
                d={
                  collapsed
                    ? "M1.500 1L4 3.500L6.500 1M1.500 5L4 7.500L6.500 5"
                    : "M1.500 4L4 1.500L6.500 4M1.500 8L4 5.500L6.500 8"
                }
                strokeWidth={1.500}
              />
            </Icon>
          </button>
        </div>
      </th>
    </tr>
  </>
);

const cell = "border-b border-r border-dotted border-[#777] p-0 pl-0.5";

type ParameterRowProps = {
  name: string;
  formula?: string;
  lock?: boolean;
  children: React.ReactNode;
};

const ParameterRow = ({ name, formula, lock, children }: ParameterRowProps) => (
  <tr className="h-[18px] leading-4">
    <td className={cell}>{name}</td>
    <td className={`${cell} whitespace-pre`}>{children}</td>
    <td className={cell}>= {formula}</td>
    <td className={cell}>
      {lock && (
        <input
          type="checkbox"
          aria-label={`Lock ${name}`}
          className="ml-0.5 mt-1 block size-3 appearance-none border-l-2 border-t-2 border-[#777] bg-white"
        />
      )}
    </td>
  </tr>
);

const ParameterTable = () => (
  <table className="w-[496px] table-fixed border-collapse border-l-2 border-t-2 border-[#6d6d6d] bg-white text-xs text-black">
    <colgroup>
      <col className="w-[151px]" />
      <col className="w-[150px]" />
      <col className="w-[158px]" />
      <col />
    </colgroup>
    <thead>
      <tr className="h-5 bg-[#f0f0f0]">
        {["Parameter", "Value", "Formula", "Lock"].map((heading) => (
          <th
            key={heading}
            scope="col"
            className="border-b-2 border-r-2 border-[#555] p-0 font-normal"
          >
            {heading}
          </th>
        ))}
      </tr>
    </thead>
    <tbody>
      <GroupRow name="Construction" />
      <ParameterRow name="Slope">
        <input
          type="text"
          aria-label="Slope"
          defaultValue="8.000000"
          className="-ml-0.5 block h-[17px] w-[149px] border border-black bg-white px-0.5"
        />
      </ParameterRow>
      <GroupRow name="Graphics" />
      <ParameterRow name="Pendant">
        <span className="relative ml-px block size-[13px]">
          <input
            type="checkbox"
            aria-label="Pendant"
            defaultChecked
            className="block size-[13px] appearance-none border border-[#333] bg-white"
          />
          <Check
            size={11}
            strokeWidth={2}
            className="pointer-events-none absolute left-px top-px"
          />
        </span>
      </ParameterRow>
      <GroupRow name="Materials and Finishes" />
      <ParameterRow name="Structural Material">Softwood, Lumber</ParameterRow>
      <GroupRow name="Dimensions" />
      {dimensions.map((item) => (
        <ParameterRow key={item.name} name={item.name} formula={item.formula} lock>
          {item.value}
        </ParameterRow>
      ))}
      <GroupRow name="Identity Data" collapsed />
      <tr className="h-[242px]">
        <td className={cell} />
        <td className={cell} />
        <td className={cell} />
        <td className={cell} />
      </tr>
    </tbody>
  </table>
);

const NewPage = () => (
  <Icon>
    <path d="M4.500 6v9.500h10V7l-3-3H8" fill="#fff" stroke="#444" />
    <path d="M11.500 4v3h3" stroke="#444" />
    <circle cx="4" cy="4" r="2" fill="#fff" stroke="#d9821c" />
    <path d="M4 0v1M4 7v1M0 4h1M7 4h1M1 1l1 1M6 6l1 1M7 1L6 2M2 6L1 7" stroke="#d9821c" />
  </Icon>
);

const DeletePage = () => (
  <Icon>
    <path d="M4.500 7v8.500h10V7l-3-3H8" fill="#fff" stroke="#444" />
    <path d="M11.500 4v3h3" stroke="#444" />
    <path d="M1 1l6 6M7 1L1 7" stroke="#b3202c" strokeWidth={2} />
  </Icon>
);

const SortIcon = ({ up }: { up?: boolean }) => (
  <Icon className="text-[#2c4a6e]">
    <path
      d="M2 7l2-6h1l2 6M3 5h3M2 9h5l-5 5h5"
      strokeWidth={1.500}
      stroke={up ? "#2c4a6e" : "#56738f"}
    />
    <path d={up ? "M12 14V3M10 6l2-4 2 4z" : "M12 2v11M10 10l2 4 2-4z"} fill="currentColor" />
  </Icon>
);

const MoveIcon = ({ up }: { up?: boolean }) => (
  <Icon className="text-[#a3a9b0]">
    <path d={up ? "M4 14V5M1 6l3-4 3 4z" : "M4 2v9M1 10l3 4 3-4z"} fill="currentColor" strokeWidth={2} />
    <path d="M9 1h6v3H9zM9 6h6v3H9zM9 11h6v4H9z" />
  </Icon>
);

const button =
  "h-[23px] w-[77px] border border-[#adadad] bg-[#e1e1e1] text-[11px] text-black";

const FamilyTypesDialog = () => (
  <div
    role="dialog"
    aria-labelledby="dialog-title"
    className="absolute left-[49px] top-[161px] z-20 w-[523px] border border-[#666] bg-[#f0f0f0] text-xs text-black shadow-[0_2px_10px_rgba(0,0,0,0.45)]"
  >
    <div className="flex h-8 items-center justify-between bg-white pb-0.5 pl-2 pr-[7px]">
      <h2 id="dialog-title">Family Types</h2>
      <button aria-label="Close dialog">
        <X size={17} strokeWidth={1.500} />
      </button>
    </div>

    <div className="px-[11px] pt-3">
      <div className="flex items-center">
        <label htmlFor="type-name" className="w-[71px] text-[11px]">
          Type name:
        </label>
        <div className="relative">
          <select
            id="type-name"
            className="block h-[22px] w-[333px] appearance-none border border-[#adadad] bg-[#e1e1e1] pl-[3px]"
          >
            <option>8x8</option>
          </select>
          <ChevronDown
            size={12}
            strokeWidth={2}
            className="pointer-events-none absolute right-[3px] top-[5px] text-[#555]"
          />
        </div>
        <div className="ml-2.5 flex gap-[15px]">
          <button aria-label="New type">
            <NewPage />
          </button>
          <button aria-label="Rename type">
            <svg width="16" height="16" viewBox="0 0 16 16" fill="none" aria-hidden="true">
              <path d="M.5 2.500h15v11H.5z" fill="#fff" stroke="#333" />
              <path d="M2 4h8v8H2z" fill="#a8d4f5" />
              <text
                x="2"
                y="12"
                fontSize="10"
                fontWeight="700"
                fontFamily="Liberation Sans, sans-serif"
                fill="#1e62a8"
              >
                A
              </text>
              <path d="M10 4h4M12 4v8M10 12h4" stroke="#222" />
            </svg>
          </button>
          <button aria-label="Delete type">
            <DeletePage />
          </button>
        </div>
      </div>

      <div className="relative mt-[11px]">
        <input
          type="text"
          aria-label="Search parameters"
          placeholder="Search parameters"
          className="block h-5 w-full border border-[#7a7a7a] bg-white px-0.5 text-[11px] placeholder:text-[#555]"
        />
        <span className="absolute right-0.5 top-0.5">
          <Icon w={18} h={16}>
            <circle cx="7" cy="6" r="5" fill="#dbeaf5" stroke="#667" />
            <path d="M11 10l5 5" stroke="#445" strokeWidth={3} />
          </Icon>
        </span>
      </div>

      <div className="ml-px mt-2.5">
        <ParameterTable />
      </div>

      <div className="mt-3 flex h-[23px] items-center justify-between">
        <div className="flex gap-[15px] pl-1">
          <button aria-label="Edit parameter">
            <Icon>
              <path d="M1 15l2-5 9-9 3 3-9 9z" fill="#e9cf96" stroke="#444" />
              <path d="M1 15l1-3 2 2z" fill="#222" />
            </Icon>
          </button>
          <button aria-label="New parameter">
            <NewPage />
          </button>
          <button aria-label="Delete parameter">
            <DeletePage />
          </button>
          <button aria-label="Move parameter up">
            <MoveIcon up />
          </button>
          <button aria-label="Move parameter down">
            <MoveIcon />
          </button>
          <button aria-label="Sort ascending" className="ml-3">
            <SortIcon />
          </button>
          <button aria-label="Sort descending">
            <SortIcon up />
          </button>
        </div>
        <button className="h-[23px] w-[126px] whitespace-nowrap border border-[#adadad] bg-[#e1e1e1] text-[11px]">
          Manage Lookup Tables
        </button>
      </div>

      <div className="mt-[13px] flex items-start justify-between pb-3">
        <a href="#family-types-help" className="text-[11px] leading-4 text-[#1d6fb8] underline">
          How do I manage family types?
        </a>
        <div className="flex gap-2">
          <button className={button}>OK</button>
          <button className={button}>Cancel</button>
          <button className="h-[23px] w-[77px] border-2 border-[#0078d7] bg-[#e1e1e1] text-[11px]">
            Apply
          </button>
        </div>
      </div>
    </div>
    <Icon w={10} h={10} className="absolute bottom-0.5 right-0.5 text-[#b5b5b5]">
      <path
        d="M7 1h2M4 4.500h2M7 4.500h2M1 8h2M4 8h2M7 8h2"
        strokeWidth={2}
      />
    </Icon>
  </div>
);

/* ---------- status bar ---------- */

const statusTools = [
  { label: "Select Links", d: "M2 4a3 3 0 1 1 5 2l2 0a3 3 0 1 1 3 3l-3 1v5H7v-5L4 9z" },
  { label: "Select Underlay Elements", d: "M1 13l5-8 4-3 4 1-1 4 2 6-4 2z" },
  { label: "Select Pinned Elements", d: "M3 1h9v6l2 4 1 4-7-3H2l2-5z" },
  { label: "Select Elements by Face", d: "M2 2h6l5-1-2 5 3 9-5-2H2z" },
  { label: "Drag Elements on Selection", d: "M5 1v8M2 4h7M9 6v9l2-2 3 2-1-4z" },
];

const StatusBar = () => (
  <footer className="flex h-5 shrink-0 items-start justify-between border-t border-[#8f8f8f] bg-gradient-to-b from-[#e9e9e9] to-[#c9c9c9] text-xs text-[#222]">
    <span className="pt-1 leading-[15px]">Ready</span>
    <div className="flex items-start gap-0.5 pr-[50px]">
      {statusTools.map((tool) => (
        <button
          key={tool.label}
          aria-label={tool.label}
          className="flex h-[19px] w-6 items-end justify-center border-l border-[#eee] bg-[#d9d9d9]"
        >
          <Icon className="text-[#9b9b9b]">
            <path d={tool.d} fill="currentColor" />
          </Icon>
        </button>
      ))}
      <button
        aria-label="Background processes"
        className="flex h-[19px] w-6 items-end justify-center border-l border-[#eee] bg-[#d9d9d9]"
      >
        <Icon className="text-[#9b9b9b]">
          <circle cx="8" cy="8" r="5" strokeWidth={3} />
          <circle cx="8" cy="8" r="7" strokeDasharray="2 3" />
        </Icon>
      </button>
      <button className="flex h-[19px] items-end">
        <Icon>
          <path d="M0 1h16l-6 7v8l-4-2V8z" fill="#c9d3e0" stroke="#444" />
        </Icon>
        <span className="text-[11px] leading-[13px]">:0</span>
      </button>
    </div>
  </footer>
);

const App = () => {
  return (
    <div className="relative flex h-screen flex-col overflow-hidden bg-[#e0e1e2] font-['Open_Sans','Noto_Sans',sans-serif]">
      <AppButton />
      <TitleBar />
      <TabBar />
      <Ribbon />
      <div className="h-7 shrink-0 border-b border-[#777] bg-[#e0e1e2]" />
      <div className="flex min-h-0 flex-1">
        <aside className="mr-[521px] flex w-[50px] shrink-0 flex-col overflow-hidden whitespace-nowrap bg-[#f0f0f0]">
          <PropertiesPalette />
          <ProjectBrowser />
        </aside>
        <DrawingView />
      </div>
      <StatusBar />
      <FamilyTypesDialog />
    </div>
  );
};

export default App;
